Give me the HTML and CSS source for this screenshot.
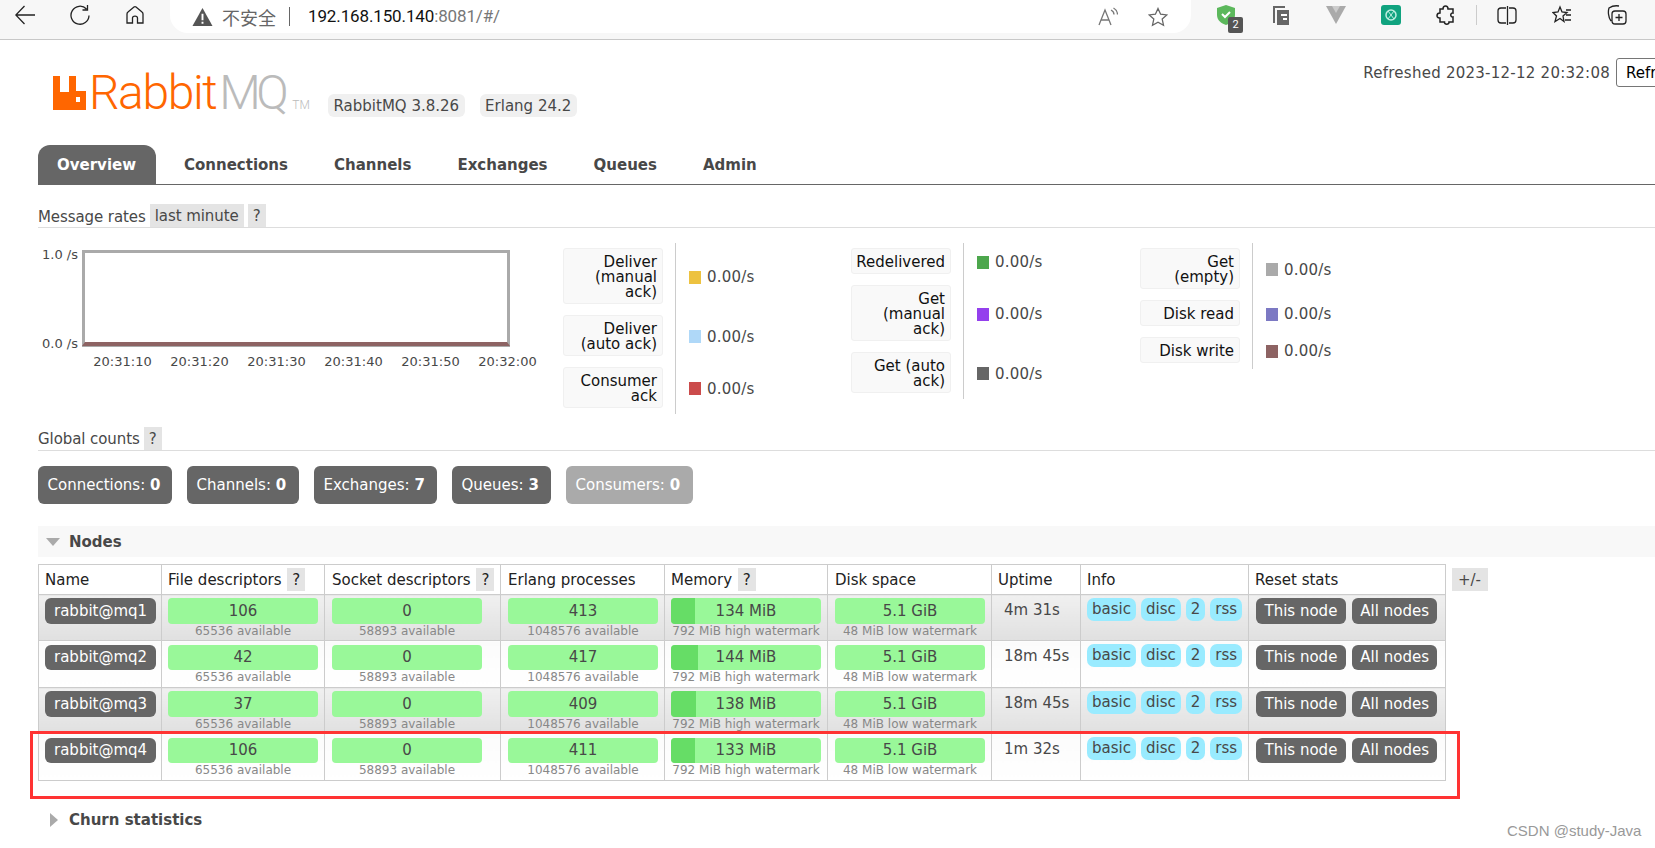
FILE: index.html
```html
<!DOCTYPE html>
<html lang="en">
<head>
<meta charset="utf-8">
<title>RabbitMQ Management</title>
<link rel="stylesheet" href="styles.css">
</head>
<body>
<div class="toolbar">
  <div class="nav-icons">
    <svg class="ico" viewBox="0 0 20 20"><path d="M20 10H.8M9.500 1L.8 10l8.700 9"/></svg>
    <svg class="ico" viewBox="0 0 20 20"><path d="M16.500 4A9 9 0 1 0 19 10.500M17.500 0v5h-5"/></svg>
    <svg class="ico" viewBox="0 0 20 20"><path d="M2 9c0-1 .3-1.500 1-2l6-5c.6-.5 1.400-.5 2 0l6 5c.7.5 1 1 1 2v9h-5.500v-5c0-2.500-5-2.500-5 0v5H2z"/></svg>
  </div>
  <div class="address">
    <svg class="warn" viewBox="0 0 22 20"><path d="M11 .5L21.500 19.500H.5z" fill="#555"/><path d="M10 6.500h2v7h-2zM10 15h2v2h-2z" fill="#fff"/></svg>
    <span class="insecure">不安全</span>
    <span class="addr-sep"></span>
    <span class="url">192.168.150.140<span class="url-dim">:8081/#/</span></span>
    <svg class="ico read" viewBox="0 0 20 20"><path d="M1 18L7 3l6 15M3 13h8M13 3c2 1 3 2.500 3 4.500M15.500 1c2.500 1.500 4 3.500 4 6.500" stroke="#777"/></svg>
    <svg class="ico star" viewBox="0 0 20 20"><path d="M10 1.500l2.600 5.700 6.200.7-4.600 4.200 1.300 6.100L10 15.200l-5.500 3 1.300-6.100L1.200 7.900l6.200-.7z" stroke="#666"/></svg>
  </div>
  <div class="ext-icons">
    <span class="ext shield">
      <svg viewBox="0 0 20 20"><path d="M10 0l9 3v7c0 5-4 8.500-9 10C5 18.500 1 15 1 10V3z" fill="#5cb85c"/><path d="M6 9l3 3 5-5" fill="none" stroke="#fff" stroke-width="2"/></svg>
      <span class="ext-badge">2</span>
    </span>
    <svg class="ext" viewBox="0 0 20 20"><path d="M2 1h12v2H4v15H2z" fill="#666"/><path d="M6 5h12v15H6z" fill="#666"/><path d="M10 10h6M12 14h4" stroke="#fff" stroke-width="2"/></svg>
    <svg class="ext" viewBox="0 0 20 20"><path d="M0 1h20L10 19z" fill="#aaa"/><path d="M6 1h8l-4 7z" fill="#ccc"/></svg>
    <svg class="ext" viewBox="0 0 20 20"><rect width="20" height="20" rx="3" fill="#10a37f"/><circle cx="10" cy="10" r="5" fill="none" stroke="#bdeee0" stroke-width="1.500"/><path d="M7 6l6 8M13 6l-6 8" stroke="#bdeee0"/></svg>
    <svg class="ico ext" viewBox="0 0 20 20"><path d="M7 4c0-4 5-4 5 0h5v4c-3-.5-3 4.500 0 4v5h-4c.5 3-5 3-4.500 0H4v-4c-4 .5-4-5 0-5V4z" stroke-width="1.500"/></svg>
    <span class="tool-sep"></span>
    <svg class="ico ext" viewBox="0 0 20 20"><path d="M9 3H4a3 3 0 0 0-3 3v9a3 3 0 0 0 3 3h5M12 3h4a3 3 0 0 1 3 3v9a3 3 0 0 1-3 3h-4M10.500 1v19"/></svg>
    <svg class="ico ext" viewBox="0 0 20 20"><path d="M8 2l2 5 5 .5-4 3.500 1 5.500-4-3-5 3 1.500-5.500L1 7.500 6 7zM14 5h5M14 10h5M13 15h6"/></svg>
    <svg class="ico ext" viewBox="0 0 20 20"><path d="M4 16C1 12 1 6 2 3c3-2 7-2.500 10-2M8 6h8a3 3 0 0 1 3 3v7a3 3 0 0 1-3 3H8a3 3 0 0 1-3-3V9a3 3 0 0 1 3-3zM12 9v7M8.500 12.500h7"/></svg>
  </div>
</div>

<div class="page">
  <header class="head">
    <div class="logo">
      <svg class="logo-mark" viewBox="0 0 33 34"><path fill-rule="evenodd" d="M0 0h7v16h9V0h7v15h10v19H0zM23 21v5h4v-5z" fill="#f60"/></svg>
      <span class="logo-rabbit">Rabbit</span><span class="logo-mq">MQ</span><span class="logo-tm">TM</span>
    </div>
    <span class="ver ver-first">RabbitMQ 3.8.26</span>
    <span class="ver">Erlang 24.2</span>
    <div class="refresh">
      <span class="refreshed">Refreshed 2023-12-12 20:32:08</span>
      <button class="refresh-btn">Refresh</button>
    </div>
  </header>

  <nav class="tabs">
    <a class="tab active">Overview</a>
    <a class="tab">Connections</a>
    <a class="tab">Channels</a>
    <a class="tab">Exchanges</a>
    <a class="tab">Queues</a>
    <a class="tab">Admin</a>
  </nav>

  <h2 class="sub-head rates-head">Message rates <span class="chip">last minute</span> <span class="chip">?</span></h2>

  <section class="rates">
    <div class="chart">
      <div class="chart-main">
        <div class="y-axis"><span>1.0 /s</span><span>0.0 /s</span></div>
        <div class="plot"></div>
      </div>
      <div class="x-axis"><span>20:31:10</span><span>20:31:20</span><span>20:31:30</span><span>20:31:40</span><span>20:31:50</span><span>20:32:00</span></div>
    </div>

    <div class="legend">
      <div class="legend-labels">
        <div class="lab">Deliver<br>(manual<br>ack)</div>
        <div class="lab">Deliver<br>(auto ack)</div>
        <div class="lab">Consumer<br>ack</div>
      </div>
      <div class="legend-vals">
        <div class="val v3"><i class="sw c-yellow"></i>0.00/s</div>
        <div class="val v2"><i class="sw c-blue"></i>0.00/s</div>
        <div class="val v2"><i class="sw c-red"></i>0.00/s</div>
      </div>
    </div>

    <div class="legend">
      <div class="legend-labels">
        <div class="lab">Redelivered</div>
        <div class="lab">Get<br>(manual<br>ack)</div>
        <div class="lab">Get (auto<br>ack)</div>
      </div>
      <div class="legend-vals">
        <div class="val v1"><i class="sw c-green"></i>0.00/s</div>
        <div class="val v3"><i class="sw c-purple"></i>0.00/s</div>
        <div class="val v2"><i class="sw c-grey"></i>0.00/s</div>
      </div>
    </div>

    <div class="legend">
      <div class="legend-labels">
        <div class="lab">Get<br>(empty)</div>
        <div class="lab">Disk read</div>
        <div class="lab">Disk write</div>
      </div>
      <div class="legend-vals">
        <div class="val v2"><i class="sw c-silver"></i>0.00/s</div>
        <div class="val v1"><i class="sw c-violet"></i>0.00/s</div>
        <div class="val v1"><i class="sw c-brown"></i>0.00/s</div>
      </div>
    </div>
  </section>

  <h2 class="sub-head global-head">Global counts <span class="chip">?</span></h2>

  <div class="counts">
    <a class="count">Connections: <b>0</b></a>
    <a class="count">Channels: <b>0</b></a>
    <a class="count">Exchanges: <b>7</b></a>
    <a class="count">Queues: <b>3</b></a>
    <a class="count count-off">Consumers: <b>0</b></a>
  </div>

  <div class="section-bar"><i class="tri-down"></i>Nodes</div>

  <div class="nodes-wrap">
    <table class="nodes">
      <colgroup>
        <col class="w-name"><col class="w-fd"><col class="w-sd"><col class="w-ep"><col class="w-mem"><col class="w-disk"><col class="w-up"><col class="w-info"><col class="w-reset">
      </colgroup>
      <thead>
        <tr>
          <th>Name</th>
          <th>File descriptors <span class="chip">?</span></th>
          <th>Socket descriptors <span class="chip">?</span></th>
          <th>Erlang processes</th>
          <th>Memory <span class="chip">?</span></th>
          <th>Disk space</th>
          <th>Uptime</th>
          <th>Info</th>
          <th>Reset stats</th>
        </tr>
      </thead>
      <tbody>
        <tr class="alt">
          <td><a class="pill">rabbit@mq1</a></td>
          <td><div class="bar">106</div><small>65536 available</small></td>
          <td><div class="bar">0</div><small>58893 available</small></td>
          <td><div class="bar">413</div><small>1048576 available</small></td>
          <td><div class="bar"><i class="fill" style="width:24px"></i><span>134 MiB</span></div><small>792 MiB high watermark</small></td>
          <td><div class="bar">5.1 GiB</div><small>48 MiB low watermark</small></td>
          <td class="up">4m 31s</td>
          <td><div class="infos"><a>basic</a><a>disc</a><a>2</a><a>rss</a></div></td>
          <td><div class="resets"><a class="pill">This node</a><a class="pill">All nodes</a></div></td>
        </tr>
        <tr>
          <td><a class="pill">rabbit@mq2</a></td>
          <td><div class="bar">42</div><small>65536 available</small></td>
          <td><div class="bar">0</div><small>58893 available</small></td>
          <td><div class="bar">417</div><small>1048576 available</small></td>
          <td><div class="bar"><i class="fill" style="width:27px"></i><span>144 MiB</span></div><small>792 MiB high watermark</small></td>
          <td><div class="bar">5.1 GiB</div><small>48 MiB low watermark</small></td>
          <td class="up">18m 45s</td>
          <td><div class="infos"><a>basic</a><a>disc</a><a>2</a><a>rss</a></div></td>
          <td><div class="resets"><a class="pill">This node</a><a class="pill">All nodes</a></div></td>
        </tr>
        <tr class="alt">
          <td><a class="pill">rabbit@mq3</a></td>
          <td><div class="bar">37</div><small>65536 available</small></td>
          <td><div class="bar">0</div><small>58893 available</small></td>
          <td><div class="bar">409</div><small>1048576 available</small></td>
          <td><div class="bar"><i class="fill" style="width:25px"></i><span>138 MiB</span></div><small>792 MiB high watermark</small></td>
          <td><div class="bar">5.1 GiB</div><small>48 MiB low watermark</small></td>
          <td class="up">18m 45s</td>
          <td><div class="infos"><a>basic</a><a>disc</a><a>2</a><a>rss</a></div></td>
          <td><div class="resets"><a class="pill">This node</a><a class="pill">All nodes</a></div></td>
        </tr>
        <tr>
          <td><a class="pill">rabbit@mq4</a></td>
          <td><div class="bar">106</div><small>65536 available</small></td>
          <td><div class="bar">0</div><small>58893 available</small></td>
          <td><div class="bar">411</div><small>1048576 available</small></td>
          <td><div class="bar"><i class="fill" style="width:24px"></i><span>133 MiB</span></div><small>792 MiB high watermark</small></td>
          <td><div class="bar">5.1 GiB</div><small>48 MiB low watermark</small></td>
          <td class="up">1m 32s</td>
          <td><div class="infos"><a>basic</a><a>disc</a><a>2</a><a>rss</a></div></td>
          <td><div class="resets"><a class="pill">This node</a><a class="pill">All nodes</a></div></td>
        </tr>
      </tbody>
    </table>
    <span class="chip plus">+/-</span>
  </div>

  <div class="section-bar closed"><i class="tri-right"></i>Churn statistics</div>
</div>

<div class="highlight"></div>
<div class="watermark">CSDN @study-Java</div>
</body>
</html>
```

FILE: styles.css
```css
* { box-sizing: border-box; }
html, body { margin: 0; padding: 0; height: 848px; overflow: hidden; background: #fff; }
body { position: relative; font-family: "DejaVu Sans", Verdana, sans-serif; font-size: 15px; color: #484848; }

/* browser chrome */
.toolbar { display: flex; align-items: flex-start; height: 40px; background: #f7f7f7; border-bottom: 1px solid #c8c8c8; padding-left: 15px; }
.ico { width: 20px; height: 20px; fill: none; stroke: #222; stroke-width: 1.3; flex: none; }
.nav-icons { display: flex; gap: 35px; padding-top: 5px; }
.address { display: flex; align-items: center; width: 1021px; height: 33px; margin-left: 25px; padding-left: 22px; background: #fff; border-radius: 0 0 18px 18px; font-family: Roboto, sans-serif; }
.warn { width: 21px; height: 20px; flex: none; }
.insecure { margin-left: 9px; font-family: "Noto Sans CJK SC", sans-serif; font-size: 18px; color: #666; width: 53px; white-space: nowrap; }
.addr-sep { width: 1px; height: 19px; background: #666; margin: 0 18px 0 14px; }
.url { font-size: 17px; color: #111; letter-spacing: -.13px; padding-bottom: 2px; }
.url-dim { color: #777; }
.read { margin-left: 598px; }
.star { margin-left: 30px; }
.ext-icons { display: flex; align-items: center; gap: 35px; margin-left: 25px; padding-top: 5px; }
.ext { display: block; width: 20px; height: 20px; flex: none; position: relative; }
.ext-badge { position: absolute; left: 12px; top: 12px; width: 15px; height: 16px; background: #555; color: #fff; border-radius: 2px; font: 11px/16px Roboto, sans-serif; text-align: center; }
.tool-sep { width: 1px; height: 20px; background: #ccc; margin: 0 -15px; flex: none; }

/* header */
.page { padding-left: 38px; }
.head { display: flex; align-items: flex-start; height: 105px; }
.logo { display: flex; align-items: baseline; width: 270px; margin: 32px 0 0 15px; height: 42px; font-family: Roboto, sans-serif; font-weight: 300; font-size: 48px; line-height: 42px; color: #f60; }
.logo-mark { width: 33px; height: 34px; flex: none; align-self: flex-start; margin: 4px 3px 0 0; }
.logo-rabbit { letter-spacing: -1.400px; }
.logo-mq { color: #bbb; letter-spacing: -4.500px; margin-left: 3px; }
.logo-tm { color: #bbb; font-size: 12px; line-height: 11px; margin-left: 8px; font-weight: 300; }
.ver { margin-top: 54px; padding: 0 5.500px; height: 23px; line-height: 25px; background: #f0f0f0; border-radius: 6px; }
.ver-first { margin-left: 5px; }
.ver + .ver { margin-left: 15px; }
.refresh { display: flex; align-items: center; gap: 6px; margin-left: auto; margin-right: -41px; margin-top: 18px; }
.refreshed { letter-spacing: .25px; }
.refresh-btn { width: 80px; height: 29px; padding: 0 0 0 9px; background: #fff; border: 1px solid #767676; border-radius: 3px; font: 15px "DejaVu Sans", sans-serif; color: #000; text-align: left; }

/* tabs */
.tabs { display: flex; height: 40px; border-bottom: 1px solid #666; }
.tab { height: 39px; padding: 0 19px; line-height: 41px; font-weight: 700; margin-right: 8px; }
.tab.active { background: #666; color: #fff; border-radius: 12px 12px 0 0; margin-right: 9px; width: 118px; }

/* section headings */
.sub-head { display: flex; gap: 4px; height: 24px; margin: 0; padding: 0; font-size: 15px; font-weight: 400; line-height: 26px; letter-spacing: -.08px; border-bottom: 1px solid #ddd; }
.rates-head { margin-top: 19px; }
.global-head { line-height: 24px; }
.chip { display: inline-block; height: 23px; padding: 0 5px; line-height: 25px; background: #e4e4e4; }

/* rates */
.rates { display: flex; height: 199px; padding-top: 15px; }
.chart { width: 525px; padding-top: 7px; font-size: 13px; }
.chart-main { display: flex; }
.y-axis { display: flex; flex-direction: column; justify-content: space-between; width: 44px; height: 104px; margin-top: -3px; padding-right: 4px; text-align: right; }
.plot { width: 428px; height: 96px; border: 3px solid #aaa; background: #fff; border-bottom: 4px solid #8d6363; box-shadow: 0 1px 0 #aaa; }
.x-axis { display: grid; grid-template-columns: repeat(6, 77px); margin: 3px 0 0 46px; }
.x-axis span { text-align: center; }
.legend { display: flex; width: 288px; }
.legend + .legend { width: 289px; }
.legend-labels { display: flex; flex-direction: column; gap: 11px; width: 100px; padding: 5px 0 6px; }
.lab { padding: 6px 5px 3px 0; background: #f9f9f9; border: 1px solid #f0f0f0; border-radius: 3px; text-align: right; line-height: 15px; color: #111; }
.legend-vals { display: flex; flex-direction: column; gap: 11px; align-self: flex-start; margin-left: 12px; padding: 5px 0 6px 13px; border-left: 1px solid #ccc; }
.val { display: flex; align-items: center; gap: 6px; height: 26px; padding-top: 2px; letter-spacing: .2px; }
.val.v2 { height: 41px; }
.val.v3 { height: 56px; }
.sw { width: 12px; height: 13px; }
.c-yellow { background: #edc240; }
.c-blue { background: #afd8f8; }
.c-red { background: #cb4b4b; }
.c-green { background: #4da74d; }
.c-purple { background: #9440ed; }
.c-grey { background: #666; }
.c-silver { background: #aaa; }
.c-violet { background: #7c79c3; }
.c-brown { background: #8d6363; }

/* global counts */
.counts { display: grid; grid-template-columns: 134px 112px 123px 99px 127px; gap: 15px; margin-top: 15px; }
.count { height: 38px; padding-left: 9.500px; line-height: 38px; background: #666; color: #fff; border-radius: 6px; white-space: nowrap; }
.count b { font-weight: 700; }
.count-off { background: #aaa; }

/* nodes */
.section-bar { display: flex; align-items: center; height: 31px; margin-top: 22px; padding-left: 8px; background: #f8f8f8; font-weight: 700; }
.section-bar.closed { background: none; margin-top: 23px; padding-left: 12px; }
.tri-down { width: 0; height: 0; margin-right: 9px; border: 7px solid transparent; border-top: 8px solid #aaa; border-bottom: 0; }
.tri-right { width: 0; height: 0; margin-right: 11px; border: 7px solid transparent; border-left: 8px solid #aaa; border-right: 0; }
.nodes-wrap { display: flex; align-items: flex-start; gap: 6px; margin-top: 7px; }
.nodes { width: 1407px; table-layout: fixed; border-collapse: collapse; }
.w-name { width: 123px; } .w-fd { width: 163px; } .w-sd { width: 176px; } .w-ep { width: 164px; } .w-mem { width: 163px; }
.w-disk { width: 164px; } .w-up { width: 89px; } .w-info { width: 168px; } .w-reset { width: 197px; }
.nodes th, .nodes td { padding: 0 0 0 6px; border: 1px solid #ccc; vertical-align: top; text-align: left; font-weight: 400; }
.nodes th:nth-child(3), .nodes td:nth-child(3), .nodes th:nth-child(4), .nodes td:nth-child(4), .nodes th:nth-child(6), .nodes td:nth-child(6) { padding-left: 7px; }
.nodes td:first-child { padding-right: 5px; }
.nodes th { height: 30px; padding-top: 2px; line-height: 27px; color: #222; white-space: nowrap; }
.nodes th .chip { height: 23px; line-height: 25px; margin: 1px 0 0 1px; vertical-align: top; }
.nodes td { height: 47px; padding-top: 4px; background: linear-gradient(#fbfbfb, #fff); }
.nodes .alt td { height: 46px; padding-top: 3px; background: linear-gradient(#f0f0f0, #e0e0e0); }
.pill { display: block; height: 25px; padding: 0 9px; line-height: 25px; background: #666; color: #fff; border-radius: 6px; white-space: nowrap; text-align: center; }
.bar { position: relative; width: 150px; height: 25px; line-height: 25px; background: #99f899; border-radius: 4px; overflow: hidden; text-align: center; }
.alt .pill, .alt .bar { height: 26px; line-height: 26px; }
.bar span { position: relative; }
.fill { position: absolute; left: 0; top: 0; bottom: 0; background: #66dd66; }
.nodes small { display: block; width: 150px; font-size: 12px; line-height: 14px; color: #888; white-space: nowrap; text-align: center; }
.nodes td.up { padding: 3px 0 0 12px; line-height: 24px; }
.nodes .alt td.up { padding-top: 3px; }
.infos { display: flex; gap: 5px; }
.infos a { height: 23px; padding: 0 5px; line-height: 23px; background: #99ebff; border-radius: 7px; }
.nodes tr:not(.alt) .infos { margin-top: -1px; }
.resets { display: flex; gap: 6px; padding-left: 1px; }
.resets .pill { padding: 0 8.500px; }
.plus { padding: 0 6px; margin-top: 4px; width: 36px; }

/* overlays */
.highlight { position: absolute; left: 30px; top: 731px; width: 1430px; height: 68px; border: 3px solid #f33; pointer-events: none; }
.watermark { position: absolute; left: 1507px; top: 822px; font: 15px "Liberation Sans", sans-serif; color: #999; }
```
